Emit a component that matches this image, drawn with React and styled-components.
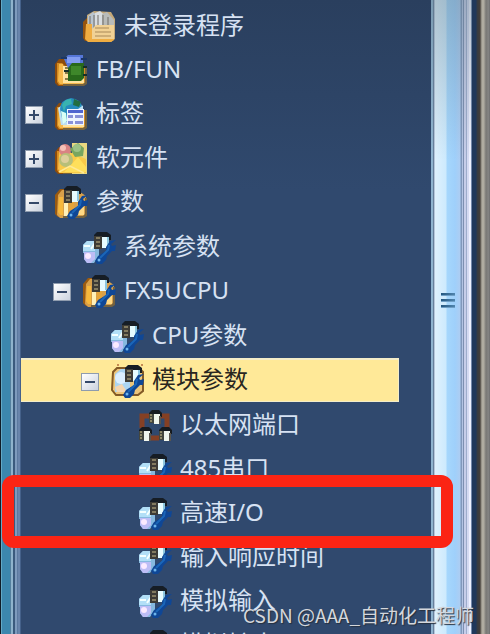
import React from "react";
import styled, { createGlobalStyle, css } from "styled-components";

const GlobalStyle = createGlobalStyle`
  * { box-sizing: border-box; }
  body {
    margin: 0;
    background: #30496e;
    font-family: "Noto Sans", "Noto Sans CJK SC", sans-serif;
  }
`;

const Page = styled.main`
  position: relative;
  display: flex;
  height: 100vh;
  overflow: hidden;
`;

const LeftRail = styled.div`
  flex: 0 0 21px;
  background: linear-gradient(
    90deg,
    #101c28 0 1px, #63a9c6 1px 2px, #3c87ae 2px 10px, #53809f 10px 11px,
    #8fb3cc 11px 13px, #3b5a7d 13px 15px, #7f9bbd 15px 17px, #5d7aa0 17px 18px,
    #6a85ac 18px 20px, #45618a 20px 21px
  );
`;

const TreePanel = styled.nav`
  flex: 1;
  min-width: 0;
  padding: 4px 32px 0 0;
  background: linear-gradient(180deg, #2a3f5e 0, #30496e 190px);
`;

const Splitter = styled.div`
  flex: 0 0 41px;
  display: flex;
  flex-direction: column;
  padding: 293px 0 0 10px;
  gap: 3px;
  background:
    linear-gradient(180deg, rgba(90, 115, 130, 0.38), rgba(90, 115, 130, 0) 160px),
    linear-gradient(
      90deg,
      #8fb3cf 0 2px, #68809c 2px 3px, #b5c6da 3px 4px, #dff1fd 4px,
      #cdeafd 15px, #a6d7fc 16px, #9fd0fb 24px, #adcdf2 29px,
      #8198bb 30px 31px, #b3c4e4 31px 32px, #7d8fb0 32px 33px,
      #c6cde9 33px 35px, #9daccb 35px 36px, #d5daf2 36px 38px, #eef1ff 38px 40px,
      #7488aa 40px 41px
    );
`;

const GripLine = styled.span`
  width: 14px;
  height: 3px;
  border-bottom: 1px solid #6f9fc6;
  background: linear-gradient(90deg, #24577f, #5185ae);
`;

const WindowEdge = styled.div`
  flex: 0 0 18px;
  background: linear-gradient(
    90deg,
    #20385b 0 4px, #343a43 5px, #443e39 8px, #7d786f 9px,
    #b0aca1 10px 12px, #8a8883 13px, #777674 15px, #8a8988 16px, #6d6d6e 18px
  );
`;

const Branch = styled.ul`
  list-style: none;
  margin: 0;
  padding: 0;

  & & { margin-top: 1px; }
`;

const Row = styled.div`
  position: relative;
  display: flex;
  align-items: center;
  height: 44px;
  padding-left: ${(p) => p.$level * 28 + 4}px;
  color: #d7e2f3;
  font-size: 24px;
  line-height: 34px;
  white-space: nowrap;
  ${(p) =>
    p.$selected &&
    css`
      color: #29261f;
      background: #ffe998;
      border: solid #f4edc9;
      border-width: 2px 1px 1px 0;
    `}
`;

const ToggleSlot = styled.span`
  flex: 0 0 18px;
  margin-right: 11px;
  height: 18px;
  padding-top: 1px;
`;

const Toggle = styled.button`
  display: block;
  width: 18px;
  height: 18px;
  padding: 0;
  border: 1px solid #8f9cae;
  background: linear-gradient(135deg, #ffffff, #cbd3df);

  svg { display: block; }
`;

const Glyph = styled.svg`
  flex: 0 0 34px;
  width: 34px;
  height: 34px;
  margin-right: 8px;
`;

const Label = styled.span`
  padding-bottom: 3px;
`;

const Callout = styled.span`
  position: absolute;
  z-index: 1;
  inset: -16px -54px -13px -19px;
  border: 12px solid #fb2414;
  border-radius: 12px;
  pointer-events: none;
`;

const Watermark = styled.footer`
  position: absolute;
  z-index: 2;
  right: 16px;
  bottom: 5px;
  color: #d4d7dc;
  font-family: "Noto Sans CJK SC", sans-serif;
  font-size: 19px;
  line-height: 28px;
  white-space: nowrap;
  text-shadow: 1px 1px 1px #26303e;
`;

function Folder() {
  return (
    <>
      <path d="M1 11l4-5h7l3 3v22l-4 2H4l-3-3z" fill="#8d4c0c" />
      <path d="M3 10h5l3 3h20v17l-3 2H5l-2-3z" fill="#d58c20" />
      <path d="M5 11h4v18h22v2H6l-2-3z" fill="#f5b94c" />
      <path d="M9 13h21v17H9z" fill="#ffe3a0" />
      <path d="M31 13h2v18l-3 2H9v-2h20l2-2z" fill="#74623f" />
    </>
  );
}

function Chip({ x = 0, y = 0 }) {
  return (
    <g transform={`translate(${x} ${y})`}>
      <path d="M12 4l3-3h10l4 3v5H12z" fill="#161d25" />
      <path d="M12 5h8v13h-8z" fill="#3d3b36" />
      <path d="M14 7h4M14 11h4M14 15h4" stroke="#9a916f" strokeWidth="1.5" />
      <path d="M20 6h6v11h-6z" fill="#e6fbff" />
      <path d="M25 6h2v10h-2z" fill="#8dc7df" />
    </g>
  );
}

function Wrench() {
  return (
    <>
      <path d="M34 10l-6 1-4 6v4l-8 5-3 5 2 3h5l4-4 1-4 5-5h3l1-6-4 1-1-2z" fill="#0f4796" />
      <path d="M27 15l-1 5-8 8" fill="none" stroke="#1b66b8" strokeWidth="2" />
      <circle cx="17" cy="30" r="1.5" fill="#6db5ed" />
    </>
  );
}

function Cube() {
  return (
    <>
      <path d="M1 15l4-4h9l3 5v10l-5 7H5l-3-4v-6H1z" fill="#86b9df" />
      <path d="M1 15l4-4h8v10H1z" fill="#b2dff7" />
      <path d="M2 16h6M9 19l4-6" stroke="#f4ffff" strokeWidth="2" />
      <path d="M2 22h11v7l-4 4H5l-3-4z" fill="#bdbdf6" />
      <circle cx="6" cy="26" r="3" fill="#fbeaff" />
    </>
  );
}

function TinyModule({ x, y }) {
  return (
    <g transform={`translate(${x} ${y})`}>
      <path d="M0 3l3-3h7l3 3v4H0z" fill="#161b20" />
      <path d="M0 4h5v9H0z" fill="#44463d" />
      <path d="M1 5h2M1 8h2M1 11h2" stroke="#d8c991" strokeWidth="1" />
      <path d="M5 4h6v10H5z" fill="#f1f6ed" />
      <path d="M10 6h2v8h-2z" fill="#5a554d" />
    </g>
  );
}

const drawings = {
  documents: (
    <>
      <path d="M1 13l5-5h8v24H3l-2-3z" fill="#96540e" />
      <path d="M5 6l7-4 17 1 4 7v20l-4 3H7l-2-3z" fill="#c6a978" />
      <path d="M6 7l5-4 7 5v15H6z" fill="#bac5cf" />
      <path d="M13 4l5-2 8 7v17H13z" fill="#d9dde0" />
      <path d="M20 5l5-2 7 8v17H20z" fill="#b8bbb9" />
      <path d="M8 7v16M12 6v17M16 6v17M21 6v17M26 8v14" stroke="#706c67" strokeWidth="1" />
      <path d="M4 15h6v14h22v2l-3 2H6l-3-3z" fill="#efad42" />
      <path d="M10 20l4-4h18v14H10z" fill="#f1d194" />
      <path d="M13 19h14M13 23h16M13 27h16" stroke="#a98958" strokeWidth="1" />
    </>
  ),
  function: (
    <>
      <Folder />
      <path d="M11 15h4M11 20h3M11 26h5" stroke="#897c46" strokeWidth="2" />
      <path d="M10 6l4-4h15v9l-4 4H14z" fill="#5576d8" />
      <path d="M13 4h13v6H13z" fill="#839df1" />
      <path d="M7 5h6M27 6h6" stroke="#1b3768" strokeWidth="2" />
      <path d="M14 15l4-5h12v15l-3 3H14z" fill="#28691b" />
      <path d="M17 13h10v9H17z" fill="#3e872a" />
      <path d="M10 18h5M29 14h4M29 22h4" stroke="#162e28" strokeWidth="2" />
    </>
  ),
  label: (
    <>
      <Folder />
      <path d="M4 11L17 2l12 7v19H7z" fill="#bddff3" />
      <path d="M6 12q0-9 11-11 9 1 11 8l-8 6-7 10-5-4z" fill="#258cbe" />
      <path d="M8 8q3-7 9-6l1 5-6 2-2 6z" fill="#38b3b0" />
      <path d="M20 2l7 3-2 5-6-2z" fill="#216d41" />
      <path d="M7 14l5 2 1 8-4 3z" fill="#d9fff5" />
      <path d="M13 12h17v16H13z" fill="#eef4ff" />
      <path d="M14 13h15v3H14z" fill="#5065cf" />
      <path d="M14 18h5v3h-5zM21 18h8v3h-8zM14 24h5v3h-5zM21 24h8v3h-8z" fill="#8991d8" />
    </>
  ),
  device: (
    <>
      <Folder />
      <path d="M18 2h15v31H18z" fill="#ead880" />
      <path d="M5 14l8-4 19 8v14H6z" fill="#f9ca49" />
      <circle cx="11" cy="9" r="6" fill="#d98383" />
      <circle cx="9" cy="7" r="3" fill="#f6c1b7" />
      <path d="M16 8l8-6 6 5-1 8-8 1z" fill="#78a65f" />
      <circle cx="23" cy="7" r="4" fill="#9dc386" />
      <circle cx="12" cy="19" r="7" fill="#b7bf79" />
      <circle cx="11" cy="18" r="4" fill="#ddcf9b" />
      <path d="M17 24l7-8 8 10v5H10z" fill="#ffdf5b" />
      <path d="M5 31l11-6 14 7" fill="none" stroke="#ffe995" strokeWidth="1.5" />
    </>
  ),
  parameterFolder: (
    <>
      <path d="M1 10l5-6h7v28H4l-3-3z" fill="#9a5a10" />
      <path d="M4 10l4-5h15l9 6v19l-4 3H6l-3-3z" fill="#d8a04a" />
      <path d="M5 12h4v18H6l-2-3z" fill="#f6b83c" />
      <path d="M10 14h4v17h-4z" fill="#fff0b8" />
      <path d="M15 17h5v14h-5z" fill="#e5a43a" />
      <path d="M25 22h5v8h-8z" fill="#ffd985" />
      <path d="M31 13h2v18l-3 2H9v-2h20l2-2z" fill="#74623f" />
      <Chip x={-2} />
      <Wrench />
    </>
  ),
  parameter: (
    <>
      <Cube />
      <Chip y={1} />
      <Wrench />
    </>
  ),
  module: (
    <>
      <path d="M3 8l4-4h22l4 4v19l-5 4H6l-4-5z" fill="#edc67b" stroke="#835a26" strokeWidth="2" />
      <path d="M5 10l6-5h9v19l-6 4H5z" fill="#acd5f1" />
      <circle cx="11" cy="14" r="6" fill="#dcefff" />
      <path d="M5 23l7-3 5 8H7z" fill="#f4d6b1" />
      <Chip x={3} />
      <Wrench />
      <path d="M7 1h2M31 1h2" stroke="#b26c3c" strokeWidth="1.5" />
    </>
  ),
  ethernet: (
    <>
      <path d="M4 20V8h9M22 8h7v12M11 30h10" fill="none" stroke="#854024" strokeWidth="5" />
      <TinyModule x={11} y={2} />
      <TinyModule x={1} y={19} />
      <TinyModule x={21} y={19} />
    </>
  ),
};

const tree = [
  { label: "未登录程序", icon: "documents", level: 2 },
  { label: "FB/FUN", icon: "function", level: 1 },
  { label: "标签", icon: "label", level: 1, toggle: "closed" },
  { label: "软元件", icon: "device", level: 1, toggle: "closed" },
  {
    label: "参数", icon: "parameterFolder", level: 1, toggle: "open",
    children: [
      { label: "系统参数", icon: "parameter", level: 2 },
      {
        label: "FX5UCPU", icon: "parameterFolder", level: 2, toggle: "open",
        children: [
          { label: "CPU参数", icon: "parameter", level: 3 },
          {
            label: "模块参数", icon: "module", level: 3, toggle: "open", selected: true,
            children: [
              { label: "以太网端口", icon: "ethernet", level: 4 },
              { label: "485串口", icon: "parameter", level: 4 },
              { label: "高速I/O", icon: "parameter", level: 4, marked: true },
              { label: "输入响应时间", icon: "parameter", level: 4 },
              { label: "模拟输入", icon: "parameter", level: 4 },
              { label: "模拟输出", icon: "parameter", level: 4 },
            ],
          },
        ],
      },
    ],
  },
];

function TreeItem({ item }) {
  return (
    <li>
      <Row $level={item.level - 1} $selected={item.selected}>
        <ToggleSlot>
          {item.toggle && (
            <Toggle type="button" aria-label={item.label} aria-expanded={item.toggle === "open"}>
              <svg width="16" height="16" viewBox="0 0 16 16" aria-hidden="true">
                <path
                  d={item.toggle === "open" ? "M3 8h10" : "M3 8h10M8 3v10"}
                  stroke="#344969"
                  strokeWidth="2"
                />
              </svg>
            </Toggle>
          )}
        </ToggleSlot>
        <Glyph viewBox="0 0 34 34" aria-hidden="true">{drawings[item.icon]}</Glyph>
        <Label>{item.label}</Label>
        {item.marked && <Callout />}
      </Row>
      {item.children && <TreeItems items={item.children} />}
    </li>
  );
}

function TreeItems({ items }) {
  return (
    <Branch>
      {items.map((item) => (
        <TreeItem key={item.label} item={item} />
      ))}
    </Branch>
  );
}

export default function App() {
  return (
    <Page>
      <GlobalStyle />
      <LeftRail />
      <TreePanel>
        <TreeItems items={tree} />
      </TreePanel>
      <Splitter>
        <GripLine />
        <GripLine />
        <GripLine />
      </Splitter>
      <WindowEdge />
      <Watermark>CSDN @AAA_自动化工程师</Watermark>
    </Page>
  );
}
